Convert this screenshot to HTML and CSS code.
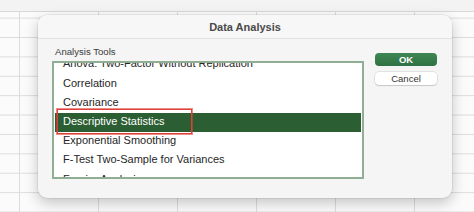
FILE: index.html
```html
<!DOCTYPE html>
<html>
<head>
<meta charset="utf-8">
<link rel="stylesheet" href="styles.css">
</head>
<body>
<div class="sheet">
  <div class="dialog">
    <div class="titlebar">Data Analysis</div>
    <div class="content">
      <div class="tools">
        <div class="label">Analysis Tools</div>
        <div class="listbox">
          <ul class="list">
            <li class="item">Anova: Two-Factor Without Replication</li>
            <li class="item">Correlation</li>
            <li class="item">Covariance</li>
            <li class="item selected">Descriptive Statistics<span class="mark"></span></li>
            <li class="item">Exponential Smoothing</li>
            <li class="item">F-Test Two-Sample for Variances</li>
            <li class="item">Fourier Analysis</li>
          </ul>
        </div>
      </div>
      <div class="buttons">
        <button class="btn ok">OK</button>
        <button class="btn cancel">Cancel</button>
      </div>
    </div>
  </div>
</div>
</body>
</html>
```

FILE: styles.css
```css
html, body {
  margin: 0;
  padding: 0;
}
body {
  width: 474px;
  height: 212px;
  overflow: hidden;
  font-family: "Liberation Sans", Arial, sans-serif;
  background: #fbfbfb;
}
.sheet {
  width: 474px;
  height: 212px;
  padding: 15px 0 0 38px;
  box-sizing: border-box;
  background-color: #fbfbfb;
  background-image:
    linear-gradient(to bottom, #f3f3f3 0, #f3f3f3 11px, #d8d8d8 11px, #d8d8d8 12px, transparent 12px),
    linear-gradient(to right, #dcdcdc 0, #dcdcdc 1px, transparent 1px),
    linear-gradient(to bottom, #dcdcdc 0, #dcdcdc 1px, transparent 1px);
  background-size: 100% 12px, 79px 100%, 100% 19.4px;
  background-repeat: no-repeat, repeat-x, repeat;
  background-position: 0 0, 19px 12px, 0 37px;
}
.dialog {
  width: 414px;
  height: 183px;
  background: #f5f5f5;
  border-radius: 9px;
  box-shadow: 0 0 0 0.5px rgba(0,0,0,0.12), 0 5px 14px rgba(0,0,0,0.22);
  overflow: hidden;
}
.titlebar {
  height: 23px;
  line-height: 24px;
  text-align: center;
  font-size: 11px;
  font-weight: bold;
  color: #4a4a4a;
  background: #f7f7f7;
  border-bottom: 1px solid #e2e2e2;
}
.content {
  display: flex;
  padding: 7px 0 0 14px;
}
.label {
  font-size: 9.6px;
  line-height: 12px;
  color: #3a3a3a;
  padding-left: 3px;
  margin-bottom: 3px;
}
.listbox {
  width: 312px;
  height: 118px;
  box-sizing: border-box;
  border: 2px solid #8fae94;
  background: #ffffff;
  overflow: hidden;
}
.list {
  list-style: none;
  margin: -7.6px 0 0 0;
  padding: 0;
}
.item {
  position: relative;
  height: 19.2px;
  line-height: 16px;
  padding-left: 8px;
  margin: 0 1px;
  font-size: 11px;
  color: #262626;
  white-space: nowrap;
}
.selected {
  background: #2b5e33;
  color: #ffffff;
}
.mark {
  position: absolute;
  left: 2px;
  top: -4px;
  width: 135px;
  height: 25px;
  box-sizing: border-box;
  border: 1px solid #e0403a;
  outline: 0.5px solid rgba(224, 64, 58, 0.6);
}
.buttons {
  display: flex;
  flex-direction: column;
  gap: 6px;
  margin-left: 11px;
  padding-top: 7px;
}
.btn {
  width: 62px;
  height: 13px;
  padding: 0;
  border: none;
  border-radius: 4px;
  font-family: "Liberation Sans", Arial, sans-serif;
  font-size: 9.5px;
  line-height: 13px;
}
.ok {
  background: linear-gradient(#408754, #2f7143);
  color: #ffffff;
  font-weight: bold;
}
.cancel {
  background: #ffffff;
  color: #333333;
  box-shadow: 0 0 0 0.5px rgba(0,0,0,0.15), 0 1px 1px rgba(0,0,0,0.12);
}
```
